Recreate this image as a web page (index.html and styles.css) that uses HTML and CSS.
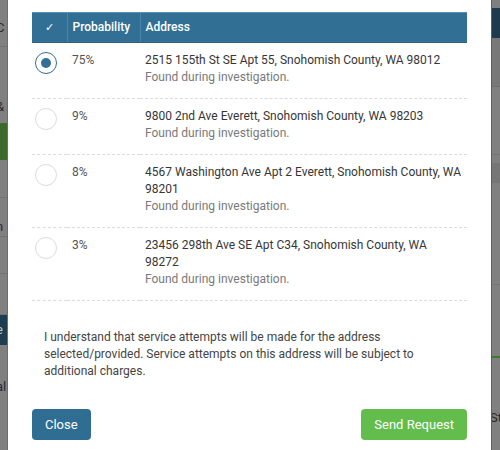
FILE: index.html
```html
<!DOCTYPE html>
<html>
<head>
<meta charset="utf-8">
<link rel="stylesheet" href="styles.css">
</head>
<body>
<div class="page">
  <div class="strip strip-left">
    <div class="sl-a"><span class="glyph">C</span></div>
    <div class="sl-b"><span class="glyph">&amp;</span></div>
    <div class="sl-green"></div>
    <div class="sl-c"></div>
    <div class="sl-d"><span class="glyph">n</span></div>
    <div class="sl-e"></div>
    <div class="sl-f"></div>
    <div class="sl-blue"><span class="glyph light">e</span></div>
    <div class="sl-g"><span class="glyph">al</span></div>
  </div>
  <div class="modal">
    <table class="addr">
      <thead>
        <tr>
          <th class="c-sel">&#10003;</th>
          <th class="c-prob">Probability</th>
          <th class="c-addr">Address</th>
        </tr>
      </thead>
      <tbody>
        <tr>
          <td class="c-sel"><span class="radio checked"></span></td>
          <td class="c-prob">75%</td>
          <td class="c-addr"><div class="line">2515 155th St SE Apt 55, Snohomish County, WA 98012</div><div class="src">Found during investigation.</div></td>
        </tr>
        <tr>
          <td class="c-sel"><span class="radio"></span></td>
          <td class="c-prob">9%</td>
          <td class="c-addr"><div class="line">9800 2nd Ave Everett, Snohomish County, WA 98203</div><div class="src">Found during investigation.</div></td>
        </tr>
        <tr>
          <td class="c-sel"><span class="radio"></span></td>
          <td class="c-prob">8%</td>
          <td class="c-addr"><div class="line">4567 Washington Ave Apt 2 Everett, Snohomish County, WA 98201</div><div class="src">Found during investigation.</div></td>
        </tr>
        <tr>
          <td class="c-sel"><span class="radio"></span></td>
          <td class="c-prob">3%</td>
          <td class="c-addr"><div class="line">23456 298th Ave SE Apt C34, Snohomish County, WA 98272</div><div class="src">Found during investigation.</div></td>
        </tr>
      </tbody>
    </table>
    <p class="note">I understand that service attempts will be made for the address selected/provided. Service attempts on this address will be subject to additional charges.</p>
    <div class="footer">
      <button class="btn btn-close">Close</button>
      <button class="btn btn-send">Send Request</button>
    </div>
  </div>
  <div class="strip strip-right">
    <div class="sr-navy"></div>
    <div class="sr-a"></div>
    <div class="sr-b"></div>
    <div class="sr-c"></div>
    <div class="sr-green"></div>
    <div class="sr-d"><span class="glyph">St</span></div>
  </div>
</div>
</body>
</html>
```

FILE: styles.css
```css
html, body {
  margin: 0;
  padding: 0;
  height: 450px;
  overflow: hidden;
  background: #7f7f7f;
  font-family: Roboto, "Liberation Sans", sans-serif;
}

.page {
  display: flex;
  height: 450px;
}

.strip {
  display: flex;
  flex-direction: column;
  overflow: hidden;
  background: #808080;
}

.strip-left {
  width: 8px;
  flex: none;
  border-right: 1px solid #6e6e6e;
  box-sizing: border-box;
}

.glyph {
  display: block;
  font-size: 13px;
  color: #2a2a2a;
  white-space: nowrap;
  line-height: 16px;
}
.glyph.light { color: #b9c4cc; }

.strip-left .glyph { margin-left: -4px; }

.sl-a { height: 47px; border-bottom: 1px solid #727272; padding-top: 20px; box-sizing: border-box; }
.sl-b { height: 76px; padding-top: 52px; box-sizing: border-box; }
.sl-green { height: 37px; background: #3b6a2c; }
.sl-c { height: 38px; border-bottom: 1px solid #727272; box-sizing: border-box; }
.sl-d { height: 39px; border-bottom: 1px solid #727272; padding-top: 21px; box-sizing: border-box; }
.sl-e { height: 37px; border-bottom: 1px solid #727272; box-sizing: border-box; }
.sl-f { height: 41px; border-bottom: 1px solid #727272; box-sizing: border-box; }
.sl-blue { height: 30px; background: #1f3d50; padding-top: 7px; box-sizing: border-box; }
.sl-g { flex: 1; padding-top: 34px; box-sizing: border-box; }

.strip-right {
  width: 9px;
  flex: none;
  border-left: 1px solid #5f5f5f;
  box-sizing: border-box;
}
.sr-navy { height: 30px; margin-top: 8px; background: #1e3a4e; }
.sr-a { height: 49px; border-bottom: 1px solid #707070; background: #787878; box-sizing: border-box; }
.sr-b { height: 68px; border-bottom: 1px solid #757575; box-sizing: border-box; }
.sr-c { height: 130px; background: linear-gradient(#808080 0, #808080 8px, #767676 8px, #767676 28px, #808080 28px, #808080 143px); border-bottom: 1px solid #757575; box-sizing: border-box; }
.sr-green { height: 73px; border-bottom: 2px solid #3d7a2c; box-sizing: border-box; }
.sr-d { flex: 1; padding-top: 52px; box-sizing: border-box; }
.strip-right .glyph { margin-left: -2px; }

.modal {
  width: 483px;
  flex: none;
  background: #ffffff;
  padding: 12px 24px 0;
  box-sizing: border-box;
}

.addr {
  width: 100%;
  border-collapse: collapse;
  font-size: 12px;
  line-height: 17px;
}

.addr thead tr {
  background: #326f94;
}

.addr th {
  color: #ffffff;
  font-weight: 500;
  font-size: 12px;
  text-align: left;
  height: 30px;
  padding: 0 5px;
  border-top: 1px solid #5a90b0;
  border-bottom: 1px solid #2c6385;
  border-left: 1px solid #4a84a6;
  box-sizing: border-box;
}
.addr th:first-child { border-left: none; text-align: center; font-size: 11px; }

.addr td {
  vertical-align: top;
  padding: 9px 4px 12px 5px;
  border-bottom: 1px dashed #dcdcdc;
  color: #444;
}

.c-sel { width: 35px; box-sizing: border-box; }
.c-prob { width: 73px; box-sizing: border-box; }
.addr td.c-sel { padding: 9px 0 0 3px; }
.addr td.c-prob { color: #555; }

.radio {
  display: block;
  width: 22px;
  height: 22px;
  border-radius: 50%;
  border: 1px solid #dcdcdc;
  box-sizing: border-box;
  position: relative;
}
.radio.checked {
  border: 1.5px solid #326f94;
}
.radio.checked::after {
  content: "";
  position: absolute;
  left: 4.5px;
  top: 4.5px;
  width: 10px;
  height: 10px;
  border-radius: 50%;
  background: #326f94;
}

.line { color: #363636; }
.src { color: #7a7a7a; }

.note {
  margin: 28px 12px 0;
  font-size: 12px;
  line-height: 17px;
  color: #444;
}

.footer {
  display: flex;
  justify-content: space-between;
  margin-top: 29px;
}

.btn {
  font-family: Roboto, "Liberation Sans", sans-serif;
  font-size: 13px;
  height: 31px;
  padding: 0 13px;
  border: none;
  border-radius: 4px;
  color: #ffffff;
  cursor: pointer;
}
.btn-close { background: #2f6d92; }
.btn-send { background: #62bd4c; }
```
